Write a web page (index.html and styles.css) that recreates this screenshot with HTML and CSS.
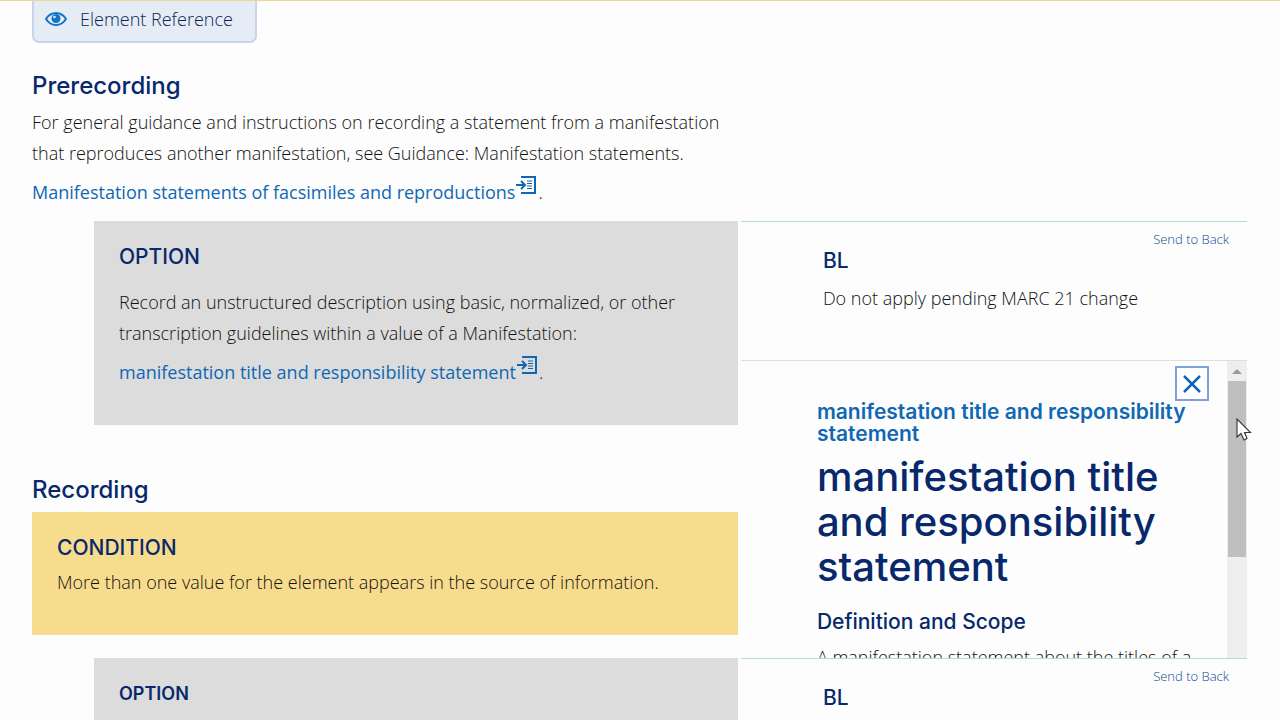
FILE: index.html
```html
<!DOCTYPE html>
<html lang="en">
<head>
    <meta charset="UTF-8">
    <meta name="viewport" content="width=device-width, initial-scale=1.0">
    <title>Manifestation statements</title>
    <link rel="stylesheet" href="styles.css">
</head>
<body>
    <svg class="icon-defs" width="0" height="0" aria-hidden="true">
        <symbol id="goto" viewBox="0 0 20 18">
            <path d="M5 1H19V17H5" fill="none" stroke="currentColor" stroke-width="2"/>
            <path d="M0 9H8M5 5L9 9L5 13" fill="none" stroke="currentColor" stroke-width="2"/>
            <path d="M11 5H16M11 7.5H16M11 10H16M11 12.5H16" stroke="currentColor" stroke-width="1.2"/>
        </symbol>
    </svg>

    <main class="page">
        <button class="reference-btn" type="button">
            <svg width="22" height="14" viewBox="0 0 22 14" aria-hidden="true">
                <path d="M1 7C6 -1 16 -1 21 7C16 15 6 15 1 7Z" fill="none" stroke="currentColor" stroke-width="2"/>
                <circle cx="11" cy="6.5" r="4.5" fill="currentColor"/>
                <circle cx="9.5" cy="5" r="1.3" fill="#e5ecf6"/>
            </svg>
            Element Reference
        </button>

        <div class="columns">
            <section class="intro">
                <h2>Prerecording</h2>
                <p>For general guidance and instructions on recording a statement from a manifestation that reproduces another manifestation, see Guidance: Manifestation statements.</p>
                <p class="link-line"><a href="#">Manifestation statements of facsimiles and reproductions<svg class="goto"><use href="#goto"/></svg></a>.</p>
            </section>

            <div class="left">
                <div class="box option">
                    <h3>OPTION</h3>
                    <p>Record an unstructured description using basic, normalized, or other transcription guidelines within a value of a Manifestation:</p>
                    <p class="link-line"><a href="#">manifestation title and responsibility statement<svg class="goto"><use href="#goto"/></svg></a>.</p>
                </div>
                <h2 class="recording">Recording</h2>
                <div class="box condition">
                    <h3>CONDITION</h3>
                    <p>More than one value for the element appears in the source of information.</p>
                </div>
            </div>

            <div class="right">
                <aside class="policy">
                    <a class="send-back" href="#">Send to Back</a>
                    <h3>BL</h3>
                    <p>Do not apply pending MARC 21 change</p>
                </aside>
                <div class="panel">
                    <div class="panel-content">
                        <button class="close" type="button" aria-label="Close">
                            <svg width="20" height="20" viewBox="0 0 20 20"><path d="M2 2L18 18M18 2L2 18" stroke="currentColor" stroke-width="2.5"/></svg>
                        </button>
                        <a class="panel-link" href="#">manifestation title and responsibility statement</a>
                        <h1>manifestation title and responsibility statement</h1>
                        <h3>Definition and Scope</h3>
                        <p>A manifestation statement about the titles of a manifestation and the agents responsible for it.</p>
                    </div>
                    <div class="scrollbar">
                        <span class="arrow"></span>
                        <div class="thumb"></div>
                    </div>
                </div>
            </div>

            <div class="left">
                <div class="box option option-small">
                    <h3>OPTION</h3>
                </div>
            </div>
            <div class="right">
                <aside class="policy">
                    <a class="send-back" href="#">Send to Back</a>
                    <h3>BL</h3>
                </aside>
            </div>
        </div>
    </main>

    <svg class="pointer" width="16" height="24" viewBox="0 0 16 24" aria-hidden="true">
        <path d="M1 1V19L5 15.5L8 22L11 20.5L8.5 14.5H14.5Z" fill="#fff" stroke="#333" stroke-width="1.1"/>
    </svg>
</body>
</html>
```

FILE: styles.css
```css
* {
    box-sizing: border-box;
}

body {
    margin: 0;
    height: 100vh;
    overflow: hidden;
    border-top: 1px solid #ead98f;
    background: #fdfdfd;
    color: #111;
    font-family: "Open Sans", sans-serif;
    font-size: 18px;
    font-weight: 300;
    line-height: 31px;
}

h1, h2, h3, p {
    margin: 0;
}

h1, h2, h3 {
    color: #08286c;
    font-family: Inter, sans-serif;
    font-weight: 500;
}

h1 {
    font-size: 40px;
    line-height: 45px;
}

h2 {
    font-size: 24px;
    line-height: 30px;
}

h3 {
    font-size: 21px;
    line-height: 24px;
}

a {
    color: #1068b4;
    font-weight: 500;
    text-decoration: none;
}

.icon-defs {
    position: absolute;
}

.page {
    padding: 0 33px 0 32px;
}

.reference-btn {
    display: flex;
    align-items: center;
    gap: 13px;
    width: 225px;
    height: 42px;
    padding: 0 11px 4px;
    border: 2px solid #c8d5ec;
    border-top: 0;
    border-radius: 0 0 7px 7px;
    background: #e5ecf6;
    color: #0f2454;
    font: inherit;
    white-space: nowrap;
}

.reference-btn svg {
    flex: none;
    color: #1275c1;
}

.columns {
    display: grid;
    grid-template-columns: 58.1% 1fr;
    column-gap: 3px;
}

.intro {
    grid-column: 1 / 3;
    padding: 28px 0 13px;
}

.intro h2 {
    margin-bottom: 6px;
}

.intro p {
    max-width: 706px;
}

.link-line {
    padding-top: 7px;
}

.goto {
    width: 20px;
    height: 18px;
    margin: 0 2px 0 1px;
    vertical-align: 5px;
}

.box {
    padding: 24px 25px;
}

.option {
    min-height: 204px;
    margin-left: 62px;
    background: #dcdcdc;
}

.option h3 {
    margin-bottom: 18px;
}

.option-small h3 {
    font-size: 18px;
    font-weight: 600;
}

.recording {
    padding: 50px 0 7px;
}

.condition {
    min-height: 123px;
    margin-bottom: 23px;
    background: #f8dc8d;
}

.condition h3 {
    margin-bottom: 7px;
}

.policy {
    display: flex;
    flex-direction: column;
    min-height: 139px;
    padding: 5px 18px 0 82px;
    border-top: 1px solid #b5ddd7;
}

.policy h3 {
    margin: -2px 0 10px;
}

.send-back {
    align-self: flex-end;
    color: #0f4a90;
    font-size: 13px;
    font-weight: 300;
    line-height: 24px;
}

.panel {
    display: flex;
    height: 298px;
    border-top: 1px solid #ddd;
    overflow: hidden;
}

.panel-content {
    flex: 1;
    padding: 5px 18px 0 76px;
}

.close {
    display: flex;
    align-items: center;
    justify-content: center;
    width: 34px;
    height: 35px;
    margin-left: auto;
    padding: 0;
    border: 2px solid #7d9fda;
    background: #fff;
    color: #1068b4;
}

.close svg {
    flex: none;
}

.panel-link {
    display: block;
    font-family: Inter, sans-serif;
    font-size: 21px;
    font-weight: 600;
    line-height: 22px;
}

.panel h1 {
    margin: 9px 0 21px;
}

.panel h3 {
    margin-bottom: 8px;
}

.scrollbar {
    width: 20px;
    padding: 0 1px;
    background: #eee;
}

.arrow {
    display: block;
    width: 10px;
    margin: 8px auto 7px;
    border: 5px solid transparent;
    border-top: 0;
    border-bottom-color: #999;
}

.thumb {
    height: 176px;
    background: #bfbfbf;
}

.pointer {
    position: absolute;
    left: 1236px;
    top: 418px;
}
```
